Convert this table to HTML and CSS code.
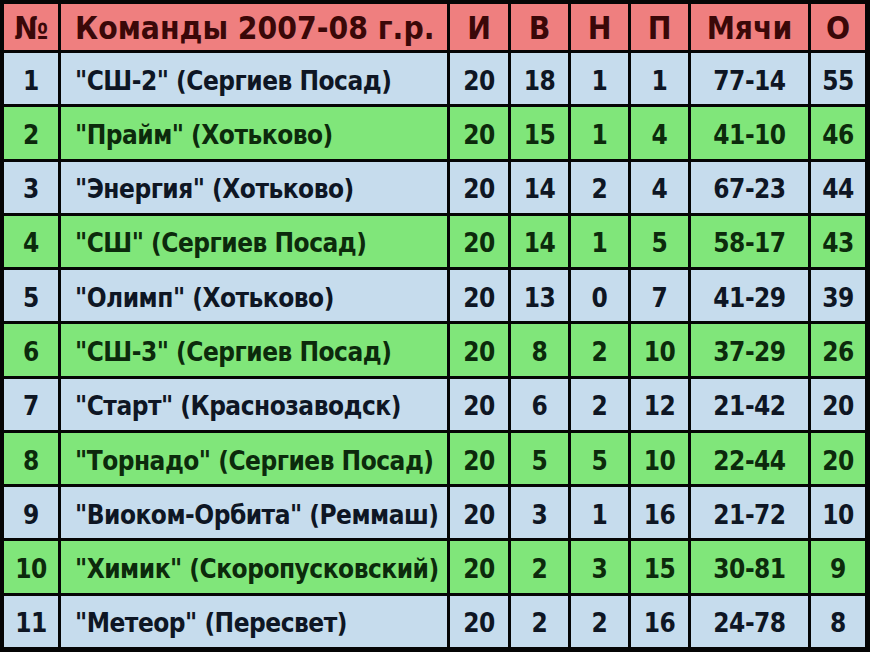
FILE: index.html
```html
<!DOCTYPE html>
<html lang="ru">
<head>
<meta charset="utf-8">
<title>Команды 2007-08 г.р.</title>
<link rel="stylesheet" href="styles.css">
</head>
<body>
<div class="table">
  <div class="cell head">№</div>
  <div class="cell head team">Команды 2007-08 г.р.</div>
  <div class="cell head">И</div>
  <div class="cell head">В</div>
  <div class="cell head">Н</div>
  <div class="cell head">П</div>
  <div class="cell head">Мячи</div>
  <div class="cell head">О</div>

  <div class="cell blue">1</div><div class="cell blue team">"СШ-2" (Сергиев Посад)</div><div class="cell blue">20</div><div class="cell blue">18</div><div class="cell blue">1</div><div class="cell blue">1</div><div class="cell blue">77-14</div><div class="cell blue">55</div>
  <div class="cell green">2</div><div class="cell green team">"Прайм" (Хотьково)</div><div class="cell green">20</div><div class="cell green">15</div><div class="cell green">1</div><div class="cell green">4</div><div class="cell green">41-10</div><div class="cell green">46</div>
  <div class="cell blue">3</div><div class="cell blue team">"Энергия" (Хотьково)</div><div class="cell blue">20</div><div class="cell blue">14</div><div class="cell blue">2</div><div class="cell blue">4</div><div class="cell blue">67-23</div><div class="cell blue">44</div>
  <div class="cell green">4</div><div class="cell green team">"СШ" (Сергиев Посад)</div><div class="cell green">20</div><div class="cell green">14</div><div class="cell green">1</div><div class="cell green">5</div><div class="cell green">58-17</div><div class="cell green">43</div>
  <div class="cell blue">5</div><div class="cell blue team">"Олимп" (Хотьково)</div><div class="cell blue">20</div><div class="cell blue">13</div><div class="cell blue">0</div><div class="cell blue">7</div><div class="cell blue">41-29</div><div class="cell blue">39</div>
  <div class="cell green">6</div><div class="cell green team">"СШ-3" (Сергиев Посад)</div><div class="cell green">20</div><div class="cell green">8</div><div class="cell green">2</div><div class="cell green">10</div><div class="cell green">37-29</div><div class="cell green">26</div>
  <div class="cell blue">7</div><div class="cell blue team">"Старт" (Краснозаводск)</div><div class="cell blue">20</div><div class="cell blue">6</div><div class="cell blue">2</div><div class="cell blue">12</div><div class="cell blue">21-42</div><div class="cell blue">20</div>
  <div class="cell green">8</div><div class="cell green team">"Торнадо" (Сергиев Посад)</div><div class="cell green">20</div><div class="cell green">5</div><div class="cell green">5</div><div class="cell green">10</div><div class="cell green">22-44</div><div class="cell green">20</div>
  <div class="cell blue">9</div><div class="cell blue team">"Виоком-Орбита" (Реммаш)</div><div class="cell blue">20</div><div class="cell blue">3</div><div class="cell blue">1</div><div class="cell blue">16</div><div class="cell blue">21-72</div><div class="cell blue">10</div>
  <div class="cell green">10</div><div class="cell green team">"Химик" (Скоропусковский)</div><div class="cell green">20</div><div class="cell green">2</div><div class="cell green">3</div><div class="cell green">15</div><div class="cell green">30-81</div><div class="cell green">9</div>
  <div class="cell blue">11</div><div class="cell blue team">"Метеор" (Пересвет)</div><div class="cell blue">20</div><div class="cell blue">2</div><div class="cell blue">2</div><div class="cell blue">16</div><div class="cell blue">24-78</div><div class="cell blue">8</div>
</div>
</body>
</html>
```
FILE: styles.css
```css
html, body {
  margin: 0;
  padding: 0;
  background: #000;
}
.table {
  box-sizing: border-box;
  width: 870px;
  height: 652px;
  padding: 4px 5px 5px 4px;
  background: #050505;
  display: grid;
  grid-template-columns: 54px 386px 58px 57px 57px 57px 117px 54px;
  grid-template-rows: 46px repeat(11, 1fr);
  gap: 3px;
  font-family: "DejaVu Sans Condensed", "DejaVu Sans", sans-serif;
  font-weight: bold;
}
.cell {
  display: flex;
  align-items: center;
  justify-content: center;
  font-size: 26px;
  letter-spacing: -0.5px;
  white-space: nowrap;
  overflow: hidden;
  padding-top: 4px;
}
.team {
  justify-content: flex-start;
  padding-left: 14px;
}
.head {
  background: #ef7f7f;
  color: #3a0808;
  font-size: 31.5px;
  letter-spacing: 0;
  padding-top: 1px;
  padding-bottom: 0;
}
.blue {
  background: #c6dced;
  color: #0e1624;
}
.green {
  background: #80e67a;
  color: #0c2a0c;
}
```
